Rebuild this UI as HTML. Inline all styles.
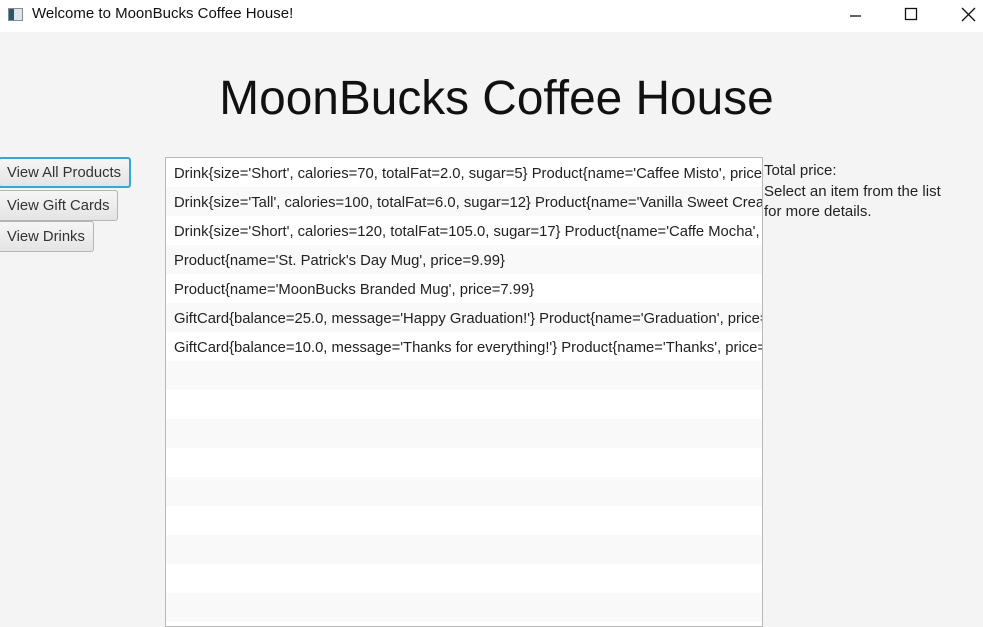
<!DOCTYPE html>
<html><head><style>
*{margin:0;padding:0;box-sizing:border-box}
body{width:983px;height:623px;overflow:hidden;background:#f4f4f4;font-family:"Liberation Sans",sans-serif;position:relative;color:#222}
.tb{position:absolute;left:0;top:0;width:983px;height:32px;background:#fff}
.tb .t{position:absolute;left:32px;top:5px;font-size:15px;color:#111}
.ico{position:absolute;left:8px;top:8px;width:15px;height:13px;border:1px solid #889;background:linear-gradient(90deg,#2a5a6a 0 5px,#dfe6ea 5px)}
.h1{position:absolute;left:0;width:983px;top:71px;text-align:center;font-size:47.8px;color:#111;padding-left:10px}
.btn{position:absolute;left:-2px;height:31px;border:1px solid #b5b5b5;border-radius:3px;background:linear-gradient(#f6f6f6,#e4e4e4);font-size:14.8px;color:#333;padding:7px 0 0 8px;white-space:nowrap}
.list{position:absolute;left:165px;top:157px;width:598px;height:470px;border:1px solid #b8b8b8;background:#fff;overflow:hidden}
.row{height:29px;font-size:14.8px;padding:8px 0 0 8px;white-space:nowrap;color:#222}
.row:nth-child(even){background:#f9f9f9}
.side{position:absolute;left:764px;top:161px;font-size:15px;line-height:20.5px;color:#222}
</style></head><body>
<div class="tb"><div class="ico"></div><div class="t">Welcome to MoonBucks Coffee House!</div>
<svg style="position:absolute;left:848px;top:6px" width="130" height="16"><line x1="2" y1="10" x2="13" y2="10" stroke="#111" stroke-width="1.3"/><rect x="57.5" y="2.5" width="11" height="11" fill="none" stroke="#111" stroke-width="1.3"/><path d="M114 2L127 15M127 2L114 15" stroke="#111" stroke-width="1.3"/></svg></div>
<div class="h1">MoonBucks Coffee House</div>
<div class="btn" style="top:157px;width:133px;border:2px solid #3aa7d0;padding-left:7px;padding-top:6px">View All Products</div>
<div class="btn" style="top:190px;width:120px">View Gift Cards</div>
<div class="btn" style="top:221px;width:96px">View Drinks</div>
<div class="list">
<div class="row">Drink{size='Short', calories=70, totalFat=2.0, sugar=5} Product{name='Caffee Misto', price=2.45}</div>
<div class="row">Drink{size='Tall', calories=100, totalFat=6.0, sugar=12} Product{name='Vanilla Sweet Cream'}</div>
<div class="row">Drink{size='Short', calories=120, totalFat=105.0, sugar=17} Product{name='Caffe Mocha', price}</div>
<div class="row">Product{name='St. Patrick's Day Mug', price=9.99}</div>
<div class="row">Product{name='MoonBucks Branded Mug', price=7.99}</div>
<div class="row">GiftCard{balance=25.0, message='Happy Graduation!'} Product{name='Graduation', price=25}</div>
<div class="row">GiftCard{balance=10.0, message='Thanks for everything!'} Product{name='Thanks', price=10}</div>
<div class="row"></div><div class="row"></div><div class="row"></div><div class="row"></div><div class="row"></div><div class="row"></div><div class="row"></div><div class="row"></div><div class="row"></div>
</div>
<div class="side">Total price:<br>Select an item from the list<br>for more details.</div>
</body></html>
